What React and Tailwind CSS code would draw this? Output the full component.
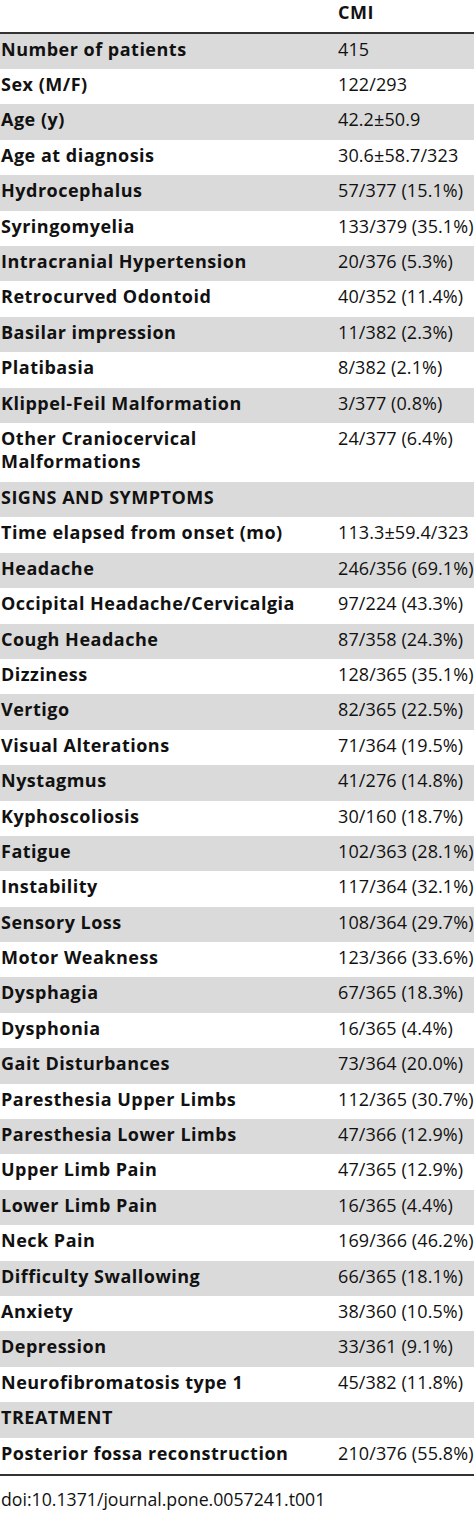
const rows = [
  ["Number of patients", "415"],
  ["Sex (M/F)", "122/293"],
  ["Age (y)", "42.2±50.9"],
  ["Age at diagnosis", "30.6±58.7/323"],
  ["Hydrocephalus", "57/377 (15.1%)"],
  ["Syringomyelia", "133/379 (35.1%)"],
  ["Intracranial Hypertension", "20/376 (5.3%)"],
  ["Retrocurved Odontoid", "40/352 (11.4%)"],
  ["Basilar impression", "11/382 (2.3%)"],
  ["Platibasia", "8/382 (2.1%)"],
  ["Klippel-Feil Malformation", "3/377 (0.8%)"],
  ["Other Craniocervical Malformations", "24/377 (6.4%)", true],
  ["SIGNS AND SYMPTOMS", ""],
  ["Time elapsed from onset (mo)", "113.3±59.4/323"],
  ["Headache", "246/356 (69.1%)"],
  ["Occipital Headache/Cervicalgia", "97/224 (43.3%)"],
  ["Cough Headache", "87/358 (24.3%)"],
  ["Dizziness", "128/365 (35.1%)"],
  ["Vertigo", "82/365 (22.5%)"],
  ["Visual Alterations", "71/364 (19.5%)"],
  ["Nystagmus", "41/276 (14.8%)"],
  ["Kyphoscoliosis", "30/160 (18.7%)"],
  ["Fatigue", "102/363 (28.1%)"],
  ["Instability", "117/364 (32.1%)"],
  ["Sensory Loss", "108/364 (29.7%)"],
  ["Motor Weakness", "123/366 (33.6%)"],
  ["Dysphagia", "67/365 (18.3%)"],
  ["Dysphonia", "16/365 (4.4%)"],
  ["Gait Disturbances", "73/364 (20.0%)"],
  ["Paresthesia Upper Limbs", "112/365 (30.7%)"],
  ["Paresthesia Lower Limbs", "47/366 (12.9%)"],
  ["Upper Limb Pain", "47/365 (12.9%)"],
  ["Lower Limb Pain", "16/365 (4.4%)"],
  ["Neck Pain", "169/366 (46.2%)"],
  ["Difficulty Swallowing", "66/365 (18.1%)"],
  ["Anxiety", "38/360 (10.5%)"],
  ["Depression", "33/361 (9.1%)"],
  ["Neurofibromatosis type 1", "45/382 (11.8%)"],
  ["TREATMENT", ""],
  ["Posterior fossa reconstruction", "210/376 (55.8%)"],
];

export default function App() {
  return (
    <div
      className="w-[474px] bg-white text-[#111] text-[18px] leading-[23.5px] overflow-hidden"
      style={{ fontFamily: '"Open Sans", "Liberation Sans", sans-serif' }}
    >
      <div className="h-[31.7px] flex">
        <div className="w-[338px] pl-px"></div>
        <div className="font-bold tracking-[0.5px] leading-[24px]">CMI</div>
      </div>
      <div className="h-[2px] bg-[#333]"></div>
      {rows.map(([label, value, tall], i) => (
        <div
          key={i}
          className={
            "flex pt-[4px] " +
            (tall ? "h-[59px] " : "h-[35.4px] ") +
            (i % 2 === 0 ? "bg-[#dadada]" : "bg-white")
          }
        >
          <div
            className={
              "font-bold tracking-[0.5px] pl-px shrink-0 " +
              (tall ? "w-[230px]" : "w-[338px]")
            }
          >
            {label}
          </div>
          {tall && <div className="w-[108px] shrink-0"></div>}
          <div className="whitespace-nowrap tracking-[0.1px]">{value}</div>
        </div>
      ))}
      <div className="h-[2px] bg-[#333] mt-[1px]"></div>
      <div className="pt-[12px] pb-[6px] pl-px text-[17.7px]">doi:10.1371/journal.pone.0057241.t001</div>
    </div>
  );
}
